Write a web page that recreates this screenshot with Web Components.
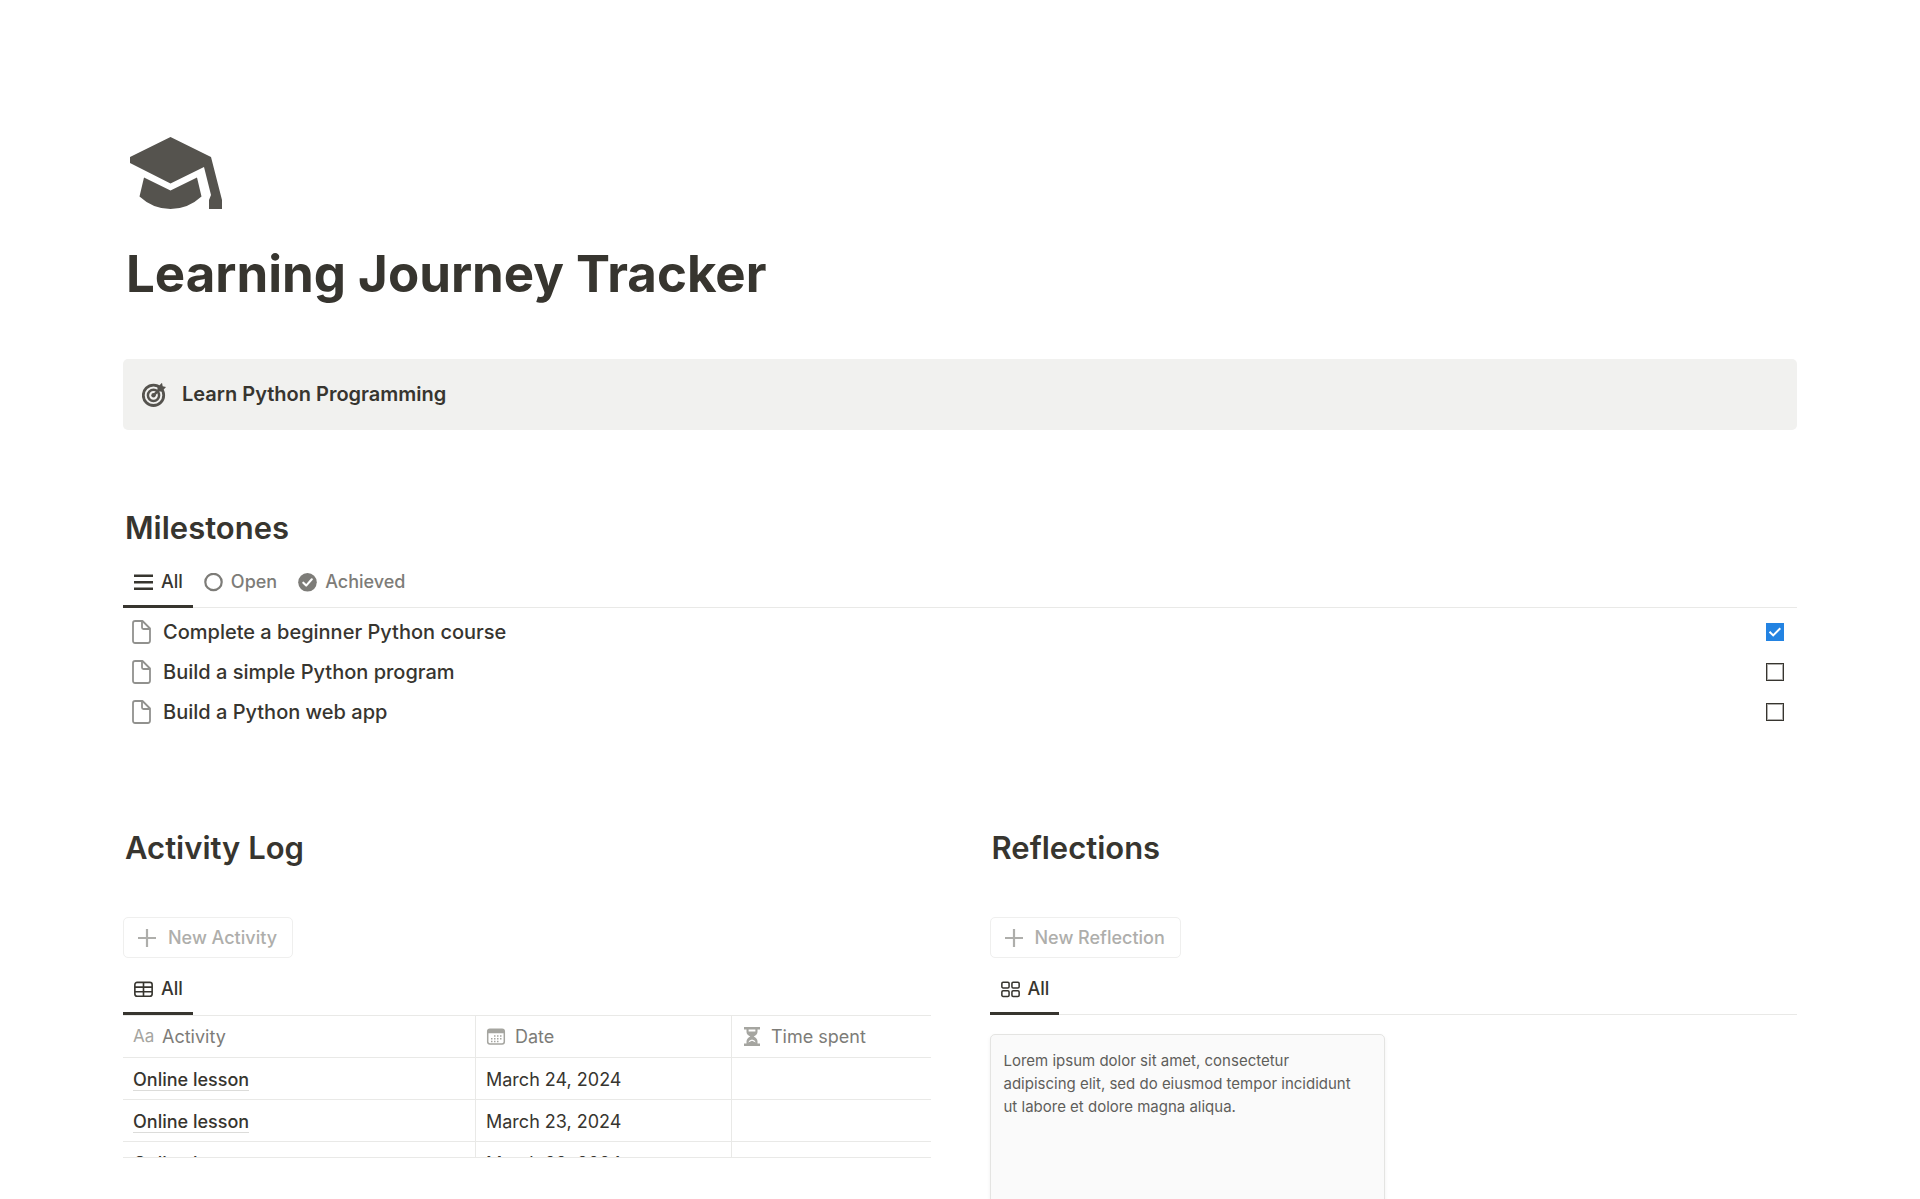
<!DOCTYPE html>
<html lang="en">
<head>
<meta charset="utf-8">
<title>Learning Journey Tracker</title>
<style>
  html { scrollbar-width: none; }
  body {
    margin: 0;
    background: #fff;
    color: #37352f;
    font-family: Inter, "Liberation Sans", sans-serif;
    --ink: #37352f;
    --muted: #7d7c78;
    --faint: #a5a5a0;
    --line: #e9e9e7;
  }
</style>
</head>
<body>
<tracker-page>
  <page-header heading="Learning Journey Tracker"></page-header>
  <goal-callout>Learn Python Programming</goal-callout>

  <page-section heading="Milestones">
    <view-tabs label="Milestone views">
      <view-tab icon="list" selected>All</view-tab>
      <view-tab icon="circle">Open</view-tab>
      <view-tab icon="done">Achieved</view-tab>
    </view-tabs>
    <milestone-list>
      <milestone-row achieved>Complete a beginner Python course</milestone-row>
      <milestone-row>Build a simple Python program</milestone-row>
      <milestone-row>Build a Python web app</milestone-row>
    </milestone-list>
  </page-section>

  <two-columns>
    <page-section heading="Activity Log">
      <new-button>New Activity</new-button>
      <view-tabs label="Activity views" plain>
        <view-tab icon="table" selected>All</view-tab>
      </view-tabs>
      <activity-table></activity-table>
    </page-section>
    <page-section heading="Reflections">
      <new-button>New Reflection</new-button>
      <view-tabs label="Reflection views">
        <view-tab icon="gallery" selected>All</view-tab>
      </view-tabs>
      <reflection-card>Lorem ipsum dolor sit amet, consectetur adipiscing elit, sed do eiusmod tempor incididunt ut labore et dolore magna aliqua.</reflection-card>
    </page-section>
  </two-columns>
</tracker-page>

<script>
const ICONS = {
  cap: ['0 0 100 73', '<path d="M40.500 0 81 20 92 63V72H79V63L81 58 74 30 40.500 46.500 0 26V20Z"/><path d="M14 40.500 40.500 53.500 67 40.500 71.500 59.500Q58 72 40.500 72 23 72 9.500 59.500Z"/>'],
  target: ['0 0 24 24', '<g fill="none" stroke="currentColor"><circle cx="11.500" cy="12.300" r="10.200" stroke-width="2.800"/><circle cx="11.500" cy="12.300" r="5.600" stroke-width="2.500"/><path d="M11.500 12.300 19 4.800" stroke-width="2.400"/></g><circle cx="11.500" cy="12.300" r="2.200"/><path d="M15.500 4.200 20 -.2 20.700 3.200 24 4 19.800 8.500H15.500Z"/>'],
  list: ['0 0 19 19', '<path d="M0 1.500h19v2.400H0zM0 8h19v2.400H0zM0 14.500h19v2.400H0z"/>'],
  circle: ['0 0 19 19', '<circle cx="9.500" cy="9" r="8.200" fill="none" stroke="currentColor" stroke-width="2.200"/>'],
  done: ['0 0 19 19', '<circle cx="9.500" cy="9.300" r="9.300"/><path d="M5.300 9.700 8.200 12.600 13.800 6.300" fill="none" stroke="#fff" stroke-width="2.100" stroke-linecap="round" stroke-linejoin="round"/>'],
  page: ['0 0 19 24', '<g fill="none" stroke="currentColor" stroke-width="1.800" stroke-linejoin="round"><path d="M3.200 1H10.500L18 8.500V20.800Q18 23 15.800 23H3.200Q1 23 1 20.800V3.200Q1 1 3.200 1Z"/><path d="M10 1V7.500Q10 9 11.500 9H18"/></g>'],
  check: ['0 0 18 18', '<path d="M3.500 8.700 7.200 12.400 14.300 5.300" fill="none" stroke="currentColor" stroke-width="2"/>'],
  plus: ['0 0 18 18', '<path d="M7.900 0h2.200v7.900H18v2.200h-7.900V18H7.900v-7.900H0V7.900h7.900z"/>'],
  table: ['0 0 20 19', '<g fill="none" stroke="currentColor" stroke-width="1.700"><rect x=".9" y="2" width="18.200" height="14.600" rx="2.400"/><path d="M1 7h18M1 11.800h18M10 2v14.600"/></g>'],
  gallery: ['0 0 20 19', '<g fill="none" stroke="currentColor" stroke-width="1.600"><rect x=".9" y="1.900" width="7.600" height="5.900" rx="1.300"/><rect x="11.500" y="1.900" width="7.600" height="5.900" rx="1.300"/><rect x=".9" y="10.900" width="7.600" height="5.900" rx="1.300"/><rect x="11.500" y="10.900" width="7.600" height="5.900" rx="1.300"/></g>'],
  calendar: ['0 0 20 19', '<rect x="1.700" y="2.200" width="16.600" height="14.800" rx="2.200" fill="none" stroke="currentColor" stroke-width="1.500"/><path d="M1.700 6.200V4Q1.700 2 3.700 2H16.300Q18.300 2 18.300 4V6.200Z"/><path d="M8 8.900H16M5 11.700H16M5 14.500H13" fill="none" stroke="currentColor" stroke-width="1.500" stroke-dasharray="1.500 1.500"/>'],
  hourglass: ['-2 0 20 19', '<path fill-rule="evenodd" d="M0 0H16V2.500H13.500V5Q13.500 7.500 9.700 9.500 13.500 11.500 13.500 14.500V16.500H16V19H0V16.500H2.500V14.500Q2.500 11.500 6.300 9.500 2.500 7.500 2.500 5V2.500H0ZM4.600 2.500V4.500H11.400V2.500ZM4.200 15.500Q5 13.200 8 12.600 11 13.200 11.800 15.500L8 13.800Z"/>']
};

function define(name, html, setup) {
  const template = document.createElement('template');
  template.innerHTML = html;
  customElements.define(name, class extends HTMLElement {
    connectedCallback() {
      if (this.shadowRoot) return;
      const root = this.attachShadow({ mode: 'open' });
      const content = template.content.cloneNode(true);
      if (setup) setup(this, content);
      root.append(content);
    }
  });
}

define('ui-icon', `
  <style>
    :host { display: block; flex: none; }
    svg { display: block; width: 100%; height: 100%; fill: currentColor; }
  </style>
  <svg aria-hidden="true"></svg>`, (host, root) => {
  const [box, shapes] = ICONS[host.getAttribute('name')];
  const svg = root.querySelector('svg');
  svg.setAttribute('viewBox', box);
  svg.innerHTML = shapes;
});

define('tracker-page', `
  <style>
    :host { display: block; padding: 137px 123px 40px; }
    main { display: flex; flex-direction: column; }
  </style>
  <main><slot></slot></main>`);

define('page-header', `
  <style>
    :host { display: block; }
    ui-icon { width: 100px; height: 73px; margin-left: 7px; color: #55534e; }
    h1 { margin: 33px 0 0; padding: 0 3px; font-size: 51px; line-height: 62px; font-weight: 700; }
  </style>
  <ui-icon name="cap"></ui-icon>
  <h1></h1>`, (host, root) => {
  root.querySelector('h1').textContent = host.getAttribute('heading');
});

define('goal-callout', `
  <style>
    :host {
      display: flex; align-items: center; gap: 16px; margin-top: 54px; padding: 20px 19px;
      background: #f1f1ef; border-radius: 5px; font-size: 20px; line-height: 31px; font-weight: 600;
    }
    ui-icon { width: 24px; height: 24px; color: #55534e; }
  </style>
  <ui-icon name="target"></ui-icon>
  <span><slot></slot></span>`);

define('page-section', `
  <style>
    :host { display: block; margin-top: 78px; min-width: 0; }
    h2 { margin: 0; padding: 0 2px 3px; font-size: 31px; line-height: 40px; font-weight: 600; }
  </style>
  <h2></h2>
  <slot></slot>`, (host, root) => {
  root.querySelector('h2').textContent = host.getAttribute('heading');
});

define('view-tabs', `
  <style>
    :host { display: flex; margin-top: 7px; border-bottom: 1px solid var(--line); }
    :host([plain]) { border-bottom-color: transparent; }
    div { display: flex; margin-bottom: -1px; }
  </style>
  <div role="tablist"><slot></slot></div>`, (host, root) => {
  root.querySelector('div').setAttribute('aria-label', host.getAttribute('label'));
});

define('view-tab', `
  <style>
    :host { display: block; }
    button {
      display: flex; align-items: center; gap: 8px; padding: 11px 10px 10px 11px;
      border: 0; border-bottom: 3px solid transparent; background: none;
      font: 500 18px/26px Inter, "Liberation Sans", sans-serif; color: var(--muted);
    }
    button[aria-selected="true"] { color: var(--ink); border-bottom-color: var(--ink); }
    ui-icon { width: 19px; height: 19px; }
  </style>
  <button type="button" role="tab"><ui-icon></ui-icon><span><slot></slot></span></button>`, (host, root) => {
  root.querySelector('ui-icon').setAttribute('name', host.getAttribute('icon'));
  root.querySelector('button').setAttribute('aria-selected', host.hasAttribute('selected'));
});

define('milestone-list', `
  <style>:host { display: flex; flex-direction: column; padding: 4px 0 18px; }</style>
  <slot></slot>`);

define('milestone-row', `
  <style>
    :host { display: flex; align-items: center; height: 40px; padding: 0 13px 0 9px; }
    ui-icon.page { width: 19px; height: 24px; color: #91918e; }
    label { flex: 1; margin-left: 12px; font-size: 20px; line-height: 30px; font-weight: 500; }
    .box { display: grid; width: 18px; height: 18px; color: #fff; }
    .box > * { grid-area: 1 / 1; }
    input {
      appearance: none; width: 18px; height: 18px; margin: 0;
      border: 1px solid var(--ink); box-shadow: inset 0 0 0 1px rgb(55 53 47 / 40%);
    }
    input:checked { border: 0; background: #2383e2; box-shadow: none; }
    .box ui-icon { display: none; pointer-events: none; }
    input:checked + ui-icon { display: block; }
  </style>
  <ui-icon class="page" name="page"></ui-icon>
  <label for="achieved"><slot></slot></label>
  <span class="box"><input type="checkbox" id="achieved"><ui-icon name="check"></ui-icon></span>`, (host, root) => {
  root.querySelector('input').checked = host.hasAttribute('achieved');
});

define('two-columns', `
  <style>:host { display: grid; grid-template-columns: 1fr 1fr; gap: 59px; }</style>
  <slot></slot>`);

define('new-button', `
  <style>
    :host { display: block; margin-top: 46px; }
    button {
      display: flex; align-items: center; gap: 12px; padding: 7px 15px 7px 14px;
      border: 1px solid #efefee; border-radius: 5px; background: none;
      font: 500 18px/25px Inter, "Liberation Sans", sans-serif; color: #aeaeab;
    }
    ui-icon { width: 18px; height: 18px; }
  </style>
  <button type="button"><ui-icon name="plus"></ui-icon><span><slot></slot></span></button>`);

define('activity-table', `
  <style>
    :host { display: block; height: 142px; overflow: hidden; border-bottom: 1px solid var(--line); }
    table { width: 100%; border-collapse: separate; border-spacing: 0; table-layout: fixed; font-size: 18px; line-height: 25px; }
    .activity { width: 352px; }
    .date { width: 256px; }
    th, td { padding: 8px 10px; text-align: left; border-top: 1px solid var(--line); }
    td { padding: 9px 10px 7px; }
    th + th, td + td { border-left: 1px solid var(--line); }
    th { color: var(--muted); font-weight: 400; }
    .head { display: flex; align-items: center; gap: 9px; }
    .head ui-icon, .aa { width: 20px; color: var(--faint); }
    .aa { font-size: 17px; }
    .head ui-icon { height: 19px; }
    a { color: inherit; font-weight: 500; text-decoration: none; box-shadow: 0 1px 0 #dcdcda; }
  </style>
  <table>
    <colgroup><col class="activity"><col class="date"><col></colgroup>
    <thead><tr>
      <th scope="col"><span class="head"><span class="aa" aria-hidden="true">Aa</span>Activity</span></th>
      <th scope="col"><span class="head"><ui-icon name="calendar"></ui-icon>Date</span></th>
      <th scope="col"><span class="head"><ui-icon name="hourglass"></ui-icon>Time spent</span></th>
    </tr></thead>
    <tbody>
      <tr><td><a href="#">Online lesson</a></td><td>March 24, 2024</td><td></td></tr>
      <tr><td><a href="#">Online lesson</a></td><td>March 23, 2024</td><td></td></tr>
      <tr><td><a href="#">Online lesson</a></td><td>March 22, 2024</td><td></td></tr>
    </tbody>
  </table>`);

define('reflection-card', `
  <style>
    :host {
      display: block; box-sizing: border-box; width: 49%; height: 257px; margin-top: 19px; padding: 14px 26px 14px 13px;
      border: 1px solid #e4e4e2; border-radius: 5px; background: #fafafa; box-shadow: 0 2px 4px rgb(15 15 15 / 6%);
      font-size: 15px; line-height: 23px; color: #5f5e5a;
    }
    p { margin: 0; }
  </style>
  <p><slot></slot></p>`);
</script>
</body>
</html>
